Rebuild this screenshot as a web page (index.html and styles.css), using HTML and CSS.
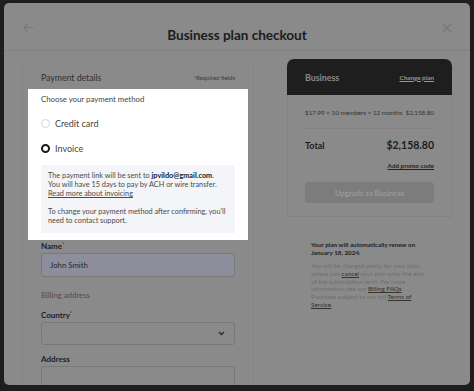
FILE: index.html
```html
<!DOCTYPE html>
<html>
<head>
<meta charset="utf-8">
<link rel="stylesheet" href="styles.css">
</head>
<body>
<div class="modal">
  <div class="header">
    <span class="hicon back"><svg width="11" height="9" viewBox="0 0 11 9"><path d="M10.5 4.5H1M4.5 1L1 4.5L4.5 8" fill="none" stroke="#787878" stroke-width="1.1"/></svg></span>
    <h1 class="title">Business plan checkout</h1>
    <span class="hicon close"><svg width="10" height="10" viewBox="0 0 10 10"><path d="M1 1L9 9M9 1L1 9" fill="none" stroke="#767676" stroke-width="1.1"/></svg></span>
  </div>
  <div class="content">
    <div class="left">
      <div class="sec-head">
        <span class="sec-title">Payment details</span>
        <span class="req">*Required fields</span>
      </div>
      <div class="highlight">
        <div class="choose">Choose your payment method</div>
        <div class="radio-row r1"><span class="radio"></span><span>Credit card</span></div>
        <div class="radio-row r2"><span class="radio on"></span><span>Invoice</span></div>
        <div class="info">
          <p>The payment link will be sent to <b>jpvildo@gmail.com</b>.<br>You will have 15 days to pay by ACH or wire transfer.<br><u>Read more about invoicing</u></p>
          <p>To change your payment method after confirming, you'll<br>need to contact support.</p>
        </div>
      </div>
      <div class="label first">Name<sup>*</sup></div>
      <div class="input filled">John Smith</div>
      <div class="sub">Billing address</div>
      <div class="label">Country<sup>*</sup></div>
      <div class="input select"><svg width="7" height="5" viewBox="0 0 7 5"><path d="M1 1L3.5 3.5L6 1" fill="none" stroke="#2a2a2a" stroke-width="1.4"/></svg></div>
      <div class="label">Address</div>
      <div class="input tall"></div>
    </div>
    <div class="right">
      <div class="plan-head">
        <span class="plan-name">Business</span>
        <span class="change">Change plan</span>
      </div>
      <div class="plan-body">
        <div class="line"><span>$17.99 × 10 members × 12 months</span><span>$2,158.80</span></div>
        <div class="total"><span>Total</span><span class="amt">$2,158.80</span></div>
        <div class="promo">Add promo code</div>
        <div class="btn">Upgrade to Business</div>
      </div>
      <div class="renew">
        <p class="strong">Your plan will automatically renew on<br>January 18, 2024.</p>
        <p class="fine">You will be charged yearly for your plan,<br>unless you <u>cancel</u> your plan prior the end<br>of the subscription term. For more<br>information, see our <u>Billing FAQs</u>.<br>Purchase subject to our full <u>Terms of<br>Service</u>.</p>
      </div>
    </div>
  </div>
</div>
</body>
</html>
```

FILE: styles.css
```css
* { box-sizing: border-box; }
html, body { margin: 0; padding: 0; }
body {
  background: #1e1e1e;
  width: 474px;
  height: 391px;
  overflow: hidden;
  padding: 3px 4px 0 4px;
  font-family: Lato, "Liberation Sans", sans-serif;
  color: #2c2c2c;
}
.modal {
  width: 466px;
  height: 382px;
  background: #8a8a8a;
  border-radius: 5px;
  overflow: hidden;
}
.header {
  height: 48px;
  border-bottom: 1px solid #808080;
  display: flex;
  justify-content: space-between;
  align-items: flex-start;
  padding: 0 18px 0 18px;
}
.hicon { width: 14px; display: flex; padding-top: 20px; }
.back { justify-content: flex-start; padding-left: 1px; }
.close { justify-content: flex-end; }
.title {
  margin: 0;
  padding-top: 24px;
  font-size: 13.6px;
  font-weight: 700;
  color: #1c1c1c;
  letter-spacing: -0.05px;
}
.content {
  display: flex;
  padding: 8px 18px 0 18px;
  gap: 33px;
}
.left {
  width: 232px;
  padding: 0 18px 0 18px;
  border-left: 1px solid #858585;
  border-right: 1px solid #858585;
  height: 340px;
}
.sec-head {
  display: flex;
  justify-content: space-between;
  align-items: center;
  height: 30px;
  padding-top: 7px;
}
.sec-title { font-size: 8.7px; color: #303030; }
.req { font-size: 6px; color: #3a3a3a; }
.highlight {
  background: #ffffff;
  margin: 0 -13px;
  padding: 5px 13px 7px 13px;
}
.choose { font-size: 7.8px; color: #444; line-height: 11px; }
.radio-row {
  display: flex;
  align-items: center;
  gap: 5px;
  font-size: 9px;
  color: #444;
  height: 12px;
}
.r1 { margin-top: 12px; }
.r2 { margin-top: 13px; }
.radio {
  width: 9px;
  height: 9px;
  border-radius: 50%;
  border: 1px solid #d6d6d6;
}
.radio.on { border: 2.5px solid #1a1a1a; }
.info {
  margin-top: 11px;
  background: #f3f5f9;
  padding: 6px 7px 8px 7px;
  font-size: 7.3px;
  line-height: 9px;
  color: #4a4a4a;
}
.info p { margin: 0; }
.info p + p { margin-top: 9px; }
.info b { color: #1a1a1a; font-weight: 700; line-height: 9px; }
.label {
  font-size: 8px;
  font-weight: 700;
  color: #1e1e1e;
  margin-top: 3px;
  line-height: 11px;
}
.label.first { margin-top: 1px; }
.label sup { font-size: 5px; vertical-align: 3px; font-weight: 400; line-height: 0; }
.input {
  height: 24px;
  margin-top: 1px;
  border: 1px solid #787878;
  border-radius: 3px;
  background: #8a8a8a;
}
.input.filled {
  background: #8c8e9b;
  font-size: 7.8px;
  color: #2a2a2a;
  display: flex;
  align-items: center;
  padding-left: 8px;
}
.sub { font-size: 7.8px; color: #4e4e4e; margin-top: 13px; line-height: 10px; }
.sub + .label { margin-top: 10px; }
.select {
  height: 23px;
  display: flex;
  align-items: center;
  justify-content: flex-end;
  padding-right: 9px;
}
.select + .label { margin-top: 9px; }
.tall { height: 40px; }
.right { width: 165px; }
.plan-head {
  background: #1e1e1e;
  height: 36px;
  border-radius: 7px 7px 0 0;
  display: flex;
  justify-content: space-between;
  align-items: center;
  padding: 0 18px;
}
.plan-name { font-size: 8.8px; font-weight: 700; color: #8d8d8d; }
.change { font-size: 6.3px; font-weight: 700; color: #969696; text-decoration: underline; }
.plan-body {
  border: 1px solid #828282;
  border-top: none;
  padding: 0 17px 13px 17px;
}
.line {
  display: flex;
  justify-content: space-between;
  font-size: 6.3px;
  color: #343434;
  padding: 14px 0 12px 0;
  border-bottom: 1px solid #828282;
}
.total {
  display: flex;
  justify-content: space-between;
  align-items: center;
  padding-top: 10px;
  font-weight: 700;
  color: #1c1c1c;
}
.total span:first-child { font-size: 9px; }
.amt { font-size: 10.5px; }
.promo {
  text-align: right;
  font-size: 6.3px;
  font-weight: 700;
  color: #222;
  text-decoration: underline;
  margin-top: 11px;
}
.btn {
  margin-top: 13px;
  height: 21px;
  background: #7c7c7c;
  border-radius: 4px;
  display: flex;
  align-items: center;
  justify-content: center;
  font-size: 7.6px;
  font-weight: 700;
  color: #999999;
}
.renew { padding: 24px 20px 0 24px; }
.renew p { margin: 0; font-size: 6.3px; line-height: 8px; }
.strong { font-weight: 700; color: #222; }
.fine { color: #6e6e6e; margin-top: 5px !important; line-height: 7.8px !important; }
.fine u { color: #333; }
```
